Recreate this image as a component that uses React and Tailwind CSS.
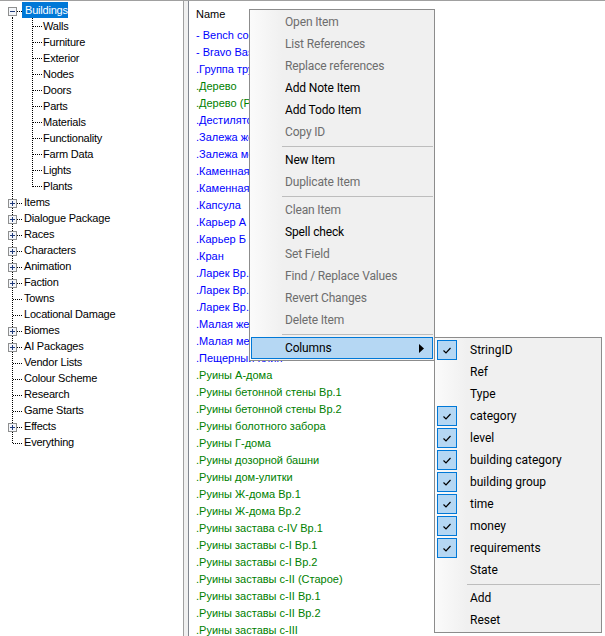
const menuFont = "[font-family:Roboto,'Liberation_Sans',sans-serif]";
const listFont = "[font-family:'Liberation_Sans',Arial,sans-serif]";

const treeItems = [
  { label: "Buildings", icon: "minus", selected: true },
  { label: "Walls", child: true },
  { label: "Furniture", child: true },
  { label: "Exterior", child: true },
  { label: "Nodes", child: true },
  { label: "Doors", child: true },
  { label: "Parts", child: true },
  { label: "Materials", child: true },
  { label: "Functionality", child: true },
  { label: "Farm Data", child: true },
  { label: "Lights", child: true },
  { label: "Plants", child: true, lastChild: true },
  { label: "Items", icon: "plus" },
  { label: "Dialogue Package", icon: "plus" },
  { label: "Races", icon: "plus" },
  { label: "Characters", icon: "plus" },
  { label: "Animation", icon: "plus" },
  { label: "Faction", icon: "plus" },
  { label: "Towns" },
  { label: "Locational Damage" },
  { label: "Biomes", icon: "plus" },
  { label: "AI Packages", icon: "plus" },
  { label: "Vendor Lists" },
  { label: "Colour Scheme" },
  { label: "Research" },
  { label: "Game Starts" },
  { label: "Effects", icon: "plus" },
  { label: "Everything", last: true },
];

const listRows = [
  ["- Bench сорт", "b"],
  ["- Bravo Base", "b"],
  [".Группа труб", "b"],
  [".Дерево", "g"],
  [".Дерево (Рост)", "g"],
  [".Дестилятор", "b"],
  [".Залежа железа", "b"],
  [".Залежа меди", "b"],
  [".Каменная стена", "b"],
  [".Каменная башня", "b"],
  [".Капсула", "b"],
  [".Карьер А", "b"],
  [".Карьер Б", "b"],
  [".Кран", "b"],
  [".Ларек Вр.1", "b"],
  [".Ларек Вр.2", "b"],
  [".Ларек Вр.3", "b"],
  [".Малая железная", "b"],
  [".Малая медная", "b"],
  [".Пещерный Клин", "b"],
  [".Руины А-дома", "g"],
  [".Руины бетонной стены Вр.1", "g"],
  [".Руины бетонной стены Вр.2", "g"],
  [".Руины болотного забора", "g"],
  [".Руины Г-дома", "g"],
  [".Руины дозорной башни", "g"],
  [".Руины дом-улитки", "g"],
  [".Руины Ж-дома Вр.1", "g"],
  [".Руины Ж-дома Вр.2", "g"],
  [".Руины застава с-IV Вр.1", "g"],
  [".Руины заставы с-I Вр.1", "g"],
  [".Руины заставы с-I Вр.2", "g"],
  [".Руины заставы с-II (Старое)", "g"],
  [".Руины заставы с-II Вр.1", "g"],
  [".Руины заставы с-II Вр.2", "g"],
  [".Руины заставы с-III", "g"],
];

const mainMenu = [
  { label: "Open Item", off: true },
  { label: "List References", off: true },
  { label: "Replace references", off: true },
  { label: "Add Note Item" },
  { label: "Add Todo Item" },
  { label: "Copy ID", off: true },
  { sep: true },
  { label: "New Item" },
  { label: "Duplicate Item", off: true },
  { sep: true },
  { label: "Clean Item", off: true },
  { label: "Spell check" },
  { label: "Set Field", off: true },
  { label: "Find / Replace Values", off: true },
  { label: "Revert Changes", off: true },
  { label: "Delete Item", off: true },
  { sep: true },
  { label: "Columns", active: true },
];

const columnsMenu = [
  { label: "StringID", on: true },
  { label: "Ref" },
  { label: "Type" },
  { label: "category", on: true },
  { label: "level", on: true },
  { label: "building category", on: true },
  { label: "building group", on: true },
  { label: "time", on: true },
  { label: "money", on: true },
  { label: "requirements", on: true },
  { label: "State" },
  { sep: true },
  { label: "Add" },
  { label: "Reset" },
];

function TreeLines({ item, index }) {
  const dots = { stroke: "#000", strokeWidth: 1, strokeDasharray: "1 1", shapeRendering: "crispEdges" };
  const width = item.child ? 43 : 24;
  return (
    <svg width={width} height="16" className="shrink-0">
      {!item.last ? (
        <line x1="12.5" y1={index === 0 ? 13 : 0} x2="12.5" y2="16" {...dots} />
      ) : (
        <line x1="12.5" y1="0" x2="12.5" y2="9" {...dots} />
      )}
      {item.child && (
        <>
          <line x1="32.5" y1="0" x2="32.5" y2={item.lastChild ? 9 : 16} {...dots} />
          <line x1="33" y1="8.5" x2="42" y2="8.5" {...dots} />
        </>
      )}
      {!item.child && <line x1={item.icon ? 17 : 13} y1="9.5" x2="22" y2="9.5" {...dots} />}
      {item.icon && (
        <g shapeRendering="crispEdges">
          <rect x="8.5" y="5.5" width="8" height="8" fill="#f4f6fa" stroke="#8e8f8f" />
          <line x1="10" y1="9.5" x2="15" y2="9.5" stroke="#1f3a7a" />
          {item.icon === "plus" && <line x1="12.5" y1="7" x2="12.5" y2="12" stroke="#1f3a7a" />}
        </g>
      )}
    </svg>
  );
}

function Tree() {
  return (
    <div className={`w-[184px] h-full shrink-0 bg-white border-r border-[#a0a0a0] pt-[1px] ${listFont}`}>
      {treeItems.map((item, i) => (
        <div key={item.label} className="flex h-[16px] items-center text-[11px] leading-[16px] tracking-[-0.2px] text-black">
          <TreeLines item={item} index={i} />
          {item.selected ? (
            <span className="-ml-[2px] w-[46px] pl-[3px] bg-[#0078d7] text-white">{item.label}</span>
          ) : (
            <span>{item.label}</span>
          )}
        </div>
      ))}
    </div>
  );
}

function List() {
  return (
    <div className={`flex-1 h-full bg-white border-l border-[#828790] ml-[4px] pl-[7px] overflow-hidden ${listFont}`}>
      <div className="h-[26px] pt-[5px] text-[11px] leading-[16px] text-black">Name</div>
      {listRows.map(([text, tone], i) => (
        <div
          key={i}
          className={tone === "g" ? "h-[17px] text-[11px] leading-[17px] text-[#008000]" : "h-[17px] text-[11px] leading-[17px] text-[#0000ff]"}
        >
          {text}
        </div>
      ))}
    </div>
  );
}

function MainMenu() {
  return (
    <div className="absolute left-[249px] top-[9px] w-[186px] border border-[#8c8c8c] py-[1px] text-[12px] tracking-[-0.15px] bg-[linear-gradient(to_right,#fbfbfb,#f0f0f0_32px)]">
      {mainMenu.map((item, i) =>
        item.sep ? (
          <div key={i} className="h-[6px] flex items-center pl-[32px] pr-[1px]">
            <div className="h-px w-full bg-[#bdbdbd]" />
          </div>
        ) : item.active ? (
          <div key={i} className="h-[22px] mx-[1px] flex items-center justify-between pl-[33px] pr-[8px] border border-[#0078d7] bg-[#b5d7f3] text-black">
            <span>{item.label}</span>
            <svg width="5" height="9" viewBox="0 0 5 9"><path d="M0 0 L5 4.5 L0 9 Z" fill="#000" /></svg>
          </div>
        ) : (
          <div key={i} className={item.off ? "h-[22px] flex items-center pl-[35px] text-[#6d6d6d]" : "h-[22px] flex items-center pl-[35px] text-black"}>
            {item.label}
          </div>
        )
      )}
    </div>
  );
}

function ColumnsMenu() {
  return (
    <div className="absolute left-[434px] top-[337px] w-[168px] border border-[#8c8c8c] py-[1px] text-[12px] text-black bg-[linear-gradient(to_right,#fbfbfb,#f0f0f0_32px)]">
      {columnsMenu.map((item, i) =>
        item.sep ? (
          <div key={i} className="h-[6px] flex items-center pl-[32px] pr-[1px]">
            <div className="h-px w-full bg-[#bdbdbd]" />
          </div>
        ) : (
          <div key={i} className="h-[22px] flex items-center pl-[2px]">
            <div className="w-[20px] h-[20px] shrink-0 flex items-center justify-center">
              {item.on && (
                <div className="w-[20px] h-[20px] flex items-center justify-center border border-[#0078d7] bg-[#b5d7f3]">
                  <svg width="8" height="7" viewBox="0 0 8 7"><path d="M0.5 3.5 L3 6 L7.5 1" fill="none" stroke="#000" strokeWidth="1.2" /></svg>
                </div>
              )}
            </div>
            <span className="ml-[13px]">{item.label}</span>
          </div>
        )
      )}
    </div>
  );
}

export default function App() {
  return (
    <div className={`relative w-[605px] h-[636px] overflow-hidden bg-[#f0f0f0] border-t border-[#a0a0a0] ${menuFont}`}>
      <div className="flex h-full">
        <Tree />
        <List />
      </div>
      <div className="absolute left-0 top-[-1px] w-full h-full">
        <MainMenu />
        <ColumnsMenu />
      </div>
    </div>
  );
}
